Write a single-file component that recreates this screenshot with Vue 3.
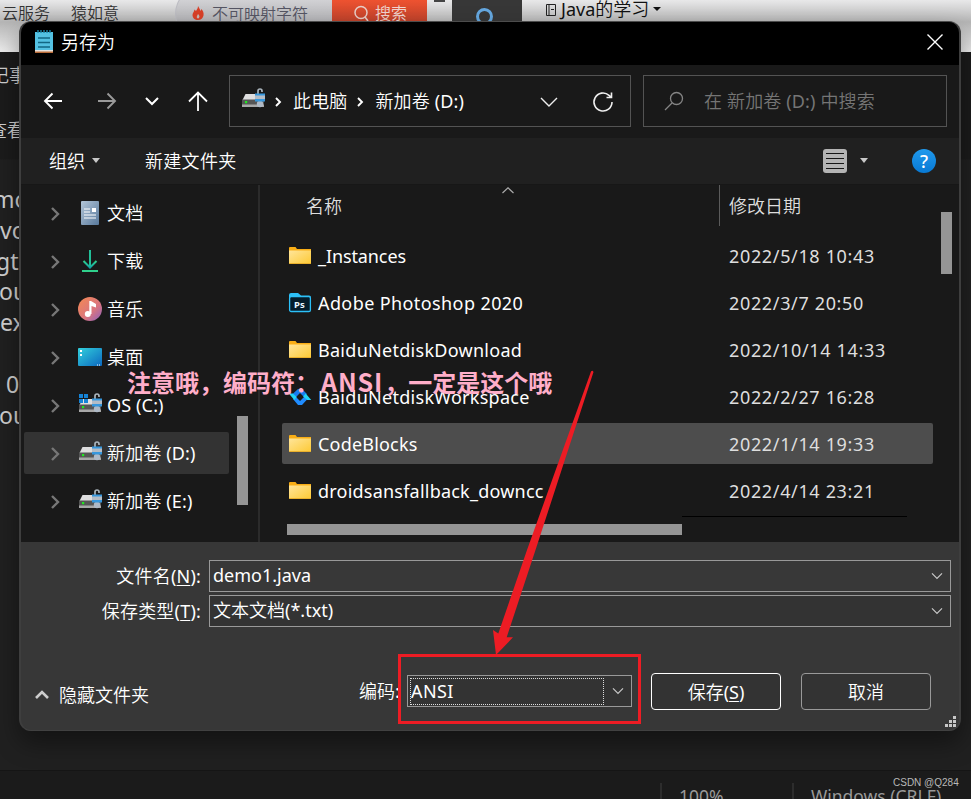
<template>
  <div class="desktop">
    <div class="browser">
      <span class="link">云服务</span>
      <span class="link second">猿如意</span>
      <div class="search-field">
        <svg class="flame" width="12" height="14" viewBox="0 0 12 14"><path d="M6 0c1 2 2 3 2.500 5L9.500 3C11 5 12 7 11.500 9.500C11 12 9 14 6 14S.5 12 .5 9C.5 7 2 6 2.500 3.500L4 5C5 3.500 6 2 6 0z" fill="#d94028" /><path d="M6 8c1 1 2 2 1 4-1 1-3 0-2-2z" fill="#c8b8b4" /></svg>
        <span>不可映射字符</span>
      </div>
      <div class="search-btn">
        <svg width="18" height="18" viewBox="0 0 18 18" fill="none" stroke="#e8cdc6" stroke-width="1.500"><circle cx="8" cy="7.500" r="6" /><path d="M12 12l3 4" /></svg>
        <span>搜索</span>
      </div>
      <i class="pointer"></i>
      <div class="avatar"><i></i></div>
      <div class="bookmark">
        <svg width="11" height="13" viewBox="0 0 11 13" fill="none" stroke="#222" stroke-width="1"><path d="M.5.5h9v11h-9zM3 .5v11M5 5.500h3" /></svg>
        <span>Java的学习</span>
        <i class="caret dark"></i>
      </div>
    </div>

    <div class="editor">
      <div class="editor-title">记事本</div>
      <div class="editor-menu">查看</div>
      <div class="code">
        <p v-for="(line, i) in codeLines" :key="i" :style="{ textIndent: line.indent + 'px' }">{{ line.text }}</p>
      </div>
    </div>
    <div class="status">
      <span class="zoom">100%</span>
      <span class="eol">Windows (CRLF)</span>
    </div>

    <div class="dialog">
      <header class="title">
        <svg width="20" height="24" viewBox="0 0 20 24"><path d="M1 2h18v21H1z" fill="#53c1e2" /><path d="M1 21h18v2H1z" fill="#b96a37" /><path d="M1 20h18v1.500H1z" fill="#e8e4df" /><path d="M4 8h12M4 12.500h12M4 17h12" stroke="#126784" stroke-width="1.600" /><path d="M4 0v3M7 0v3M10 0v3M13 0v3M16 0v3" stroke="#1d83a4" stroke-width="1.400" /></svg>
        <span>另存为</span>
        <svg class="close" width="16" height="16" viewBox="0 0 16 16" stroke="#fff" stroke-width="1.400"><path d="M.5.5l15 15M15.500.5l-15 15" /></svg>
      </header>

      <nav class="nav">
        <svg class="back" width="20" height="18" viewBox="0 0 20 18" fill="none" stroke="#fff" stroke-width="1.900"><path d="M19 9H2M9.500 1.500L2 9l7.500 7.500" /></svg>
        <svg class="forward" width="20" height="18" viewBox="0 0 20 18" fill="none" stroke="#9a9a9a" stroke-width="1.900"><path d="M1 9h17M10.500 1.500L18 9l-7.500 7.500" /></svg>
        <svg class="recent" width="14" height="9" viewBox="0 0 14 9" fill="none" stroke="#fff" stroke-width="2"><path d="M1 1l6 6 6-6" /></svg>
        <svg class="up" width="20" height="20" viewBox="0 0 20 20" fill="none" stroke="#fff" stroke-width="1.800"><path d="M10 20V2M1 10.500L10 1.500l9 9" /></svg>
        <div class="address">
          <svg class="drive" width="24" height="20" viewBox="0 0 24 20"><use href="#drive" /></svg>
          <svg class="crumb" width="7" height="10" viewBox="0 0 7 10" fill="none" stroke="#fff" stroke-width="1.900"><path d="M1 1l4 4-4 4" /></svg>
          <span>此电脑</span>
          <svg class="crumb" width="7" height="10" viewBox="0 0 7 10" fill="none" stroke="#fff" stroke-width="1.900"><path d="M1 1l4 4-4 4" /></svg>
          <span>新加卷 (D:)</span>
          <svg class="drop" width="18" height="10" viewBox="0 0 18 10" fill="none" stroke="#eee" stroke-width="1.400"><path d="M1 1l8 8 8-8" /></svg>
          <svg class="refresh" width="22" height="22" viewBox="0 0 22 22" fill="none" stroke="#eee" stroke-width="1.600"><path d="M20 11a9 9 0 1 1-3-6.700L19.500 6.500M19.500 1.500v5h-5" /></svg>
        </div>
        <div class="search">
          <svg width="20" height="20" viewBox="0 0 20 20" fill="none" stroke="#858585" stroke-width="1.300"><circle cx="12.500" cy="7.500" r="6" /><path d="M8 12l-7 7" /></svg>
          <span>在 新加卷 (D:) 中搜索</span>
        </div>
      </nav>

      <div class="toolbar">
        <span>组织</span><i class="caret"></i>
        <span class="new">新建文件夹</span>
        <svg class="view" width="24" height="24" viewBox="0 0 24 24"><rect width="24" height="24" rx="3" fill="#b4b4b4" /><path d="M3 4.500h18M3 9.500h18M3 14.500h18M3 19.500h18" stroke="#161616" stroke-width="1.200" /></svg>
        <i class="caret"></i>
        <span class="help">?</span>
      </div>

      <div class="body">
        <aside class="tree">
          <div v-for="node in nodes" :key="node.label" class="node" :class="{ active: node.active }">
            <svg class="expand" width="9" height="14" viewBox="0 0 9 14" fill="none" stroke="#777" stroke-width="2.400"><path d="M1 1l6 6-6 6" /></svg>
            <svg class="node-icon" width="24" height="24" viewBox="0 0 24 24"><use :href="'#' + node.icon" /></svg>
            <span>{{ node.label }}</span>
          </div>
          <i class="tree-thumb"></i>
        </aside>

        <section class="files">
          <div class="columns">
            <svg class="sort" width="12" height="7" viewBox="0 0 12 7" fill="none" stroke="#aaa" stroke-width="1.200"><path d="M.5 6L6 .8 11.500 6" /></svg>
            <span class="col-name">名称</span>
            <span class="col-date">修改日期</span>
          </div>
          <div v-for="file in files" :key="file.name" class="file" :class="{ hover: file.hover }">
            <svg class="file-icon" width="24" height="24" viewBox="0 0 24 24">
              <use :href="'#' + file.icon" />
              <text v-if="file.icon === 'ps'" x="6" y="17" class="ps-text">Ps</text>
            </svg>
            <span class="file-name" :style="{ letterSpacing: file.spacing + 'px' }">{{ file.name }}</span>
            <span class="file-date">{{ file.date }}</span>
          </div>
          <div class="h-scroll"><i></i></div>
          <i class="v-thumb"></i>
        </section>
      </div>

      <footer class="footer">
        <div class="field">
          <label>文件名(<u>N</u>):</label>
          <div class="combo editable"><span>demo1.java</span><svg width="12" height="8" viewBox="0 0 12 8"><use href="#chevron" /></svg></div>
        </div>
        <div class="field">
          <label>保存类型(<u>T</u>):</label>
          <div class="combo"><span>文本文档(*.txt)</span><svg width="12" height="8" viewBox="0 0 12 8"><use href="#chevron" /></svg></div>
        </div>
        <div class="actions">
          <svg width="14" height="10" viewBox="0 0 14 10" fill="none" stroke="#ccc" stroke-width="2.600"><path d="M1 8l6-6 6 6" /></svg>
          <span class="hide">隐藏文件夹</span>
          <span class="encoding">编码:</span>
          <div class="combo ansi"><span>ANSI</span><svg width="12" height="8" viewBox="0 0 12 8"><use href="#chevron" /></svg></div>
          <button class="save">保存(<u>S</u>)</button>
          <button>取消</button>
        </div>
        <svg class="grip" width="11" height="11" viewBox="0 0 11 11" fill="#c8c8c8"><path d="M8 0h3v3H8zM4 4h3v3H4zM8 4h3v3H8zM0 8h3v3H0zM4 8h3v3H4zM8 8h3v3H8z" /></svg>
      </footer>
    </div>

    <div class="note">注意哦，编码符：<span>ANSI</span>，一定是这个哦</div>
    <svg class="arrow" width="971" height="799" viewBox="0 0 971 799"><path d="M591 371.500Q592.500 370 593.500 372L535.500 550 506.700 637.300 513 637.300 496 655 493 630 498.300 633.500 527 550z" fill="#ed1c24" /></svg>
    <div class="mark"></div>
    <div class="watermark">CSDN @Q284</div>

    <svg class="defs" width="0" height="0">
      <defs>
        <linearGradient id="gFolder" x1="0" y1="0" x2="1" y2="1"><stop offset="0" stop-color="#ffe59a" /><stop offset="1" stop-color="#fdc934" /></linearGradient>
        <linearGradient id="gDoc" x1="0" y1="0" x2="1" y2="1"><stop offset="0" stop-color="#b4c6d8" /><stop offset="1" stop-color="#58799c" /></linearGradient>
        <linearGradient id="gMusic" x1="0" y1="0" x2="1" y2="1"><stop offset="0" stop-color="#f58a50" /><stop offset=".6" stop-color="#d97580" /><stop offset="1" stop-color="#8a5fc0" /></linearGradient>
        <linearGradient id="gDesk" x1="0" y1="0" x2="1" y2="1"><stop offset="0" stop-color="#32d0dc" /><stop offset="1" stop-color="#0c68c0" /></linearGradient>
        <linearGradient id="gDown" x1="0" y1="0" x2="0" y2="1"><stop offset="0" stop-color="#2fd08c" /><stop offset="1" stop-color="#12a5a6" /></linearGradient>
        <g id="drive">
          <path d="M4.500 6h15l3 6h-21z" fill="#dededf" />
          <path d="M1 11.500h22V18H1z" fill="#565656" /><path d="M1 16.500h22V19H1z" fill="#a8a8a8" />
          <path d="M4 13h2.200v2.200H4z" fill="#20e820" />
          <path d="M17 6V3q0-2 2-2t2 2v1" fill="none" stroke="#aab5bd" stroke-width="1.700" />
          <circle cx="19" cy="16" r="3.200" fill="#aeb9c6" />
          <path d="M14 5.500h10v8H14z" fill="#3697dd" /><path d="M14 7.500h10v3.500H14z" fill="#b3bcc6" />
        </g>
        <g id="disk"><use href="#drive" /></g>
        <g id="system"><use href="#drive" /><path d="M1 1h4v4H1zM6 1h4v4H6zM1 6h4v4H1zM6 6h4v4H6z" fill="#1583d6" /></g>
        <g id="doc"><rect x="3" width="18" height="24" rx="1" fill="url(#gDoc)" /><path d="M6 8h6M6 11h6M6 14h12M6 17h12" stroke="#fff" stroke-width="1.200" /><path d="M14 7h4v4h-4z" fill="#fff" /></g>
        <g id="download"><path d="M11 1h2v16h-2z" fill="#22bf98" /><path d="M5.500 12l6.500 6.500 6.500-6.500" fill="none" stroke="url(#gDown)" stroke-width="2" /><path d="M4 21h16v2H4z" fill="#2fd08c" /></g>
        <g id="music"><circle cx="12" cy="12" r="12" fill="url(#gMusic)" /><circle cx="9.800" cy="17" r="3" fill="#fff" /><path d="M11.300 4l1.700 0 5 3v3.500l-4.500-1.500v8h-2.200z" fill="#fff" /></g>
        <g id="desk"><rect y="3" width="24" height="18" rx="1" fill="url(#gDesk)" /><path d="M2 5h2v2H2zM2 9h2v2H2z" fill="#fff" /><path d="M19 20h1M21 20h1" stroke="#fff" /></g>
        <g id="folder"><path d="M1 4q0-1 1-1h5.500l1.500 2H23v5H1z" fill="#f9ae16" /><path d="M1 6.500h22V19q0 1-1 1H2q-1 0-1-1z" fill="url(#gFolder)" /><path d="M1 19h22q0 1-1 1H2q-1 0-1-1z" fill="#eab02c" /></g>
        <g id="ps"><path d="M1 4q0-2 2-2h7l3 2.500h8q2 0 2 2V12H1z" fill="#2cc0f8" /><rect x="1.600" y="5.700" width="20.800" height="14.800" rx="1.600" fill="#041c2b" stroke="#2cc0f8" stroke-width="1.300" /></g>
        <g id="baidu"><path d="M4 9.500L10 4h4l5 5-3 3-4-4-3.500 3.500L6 13.500z" fill="#187df0" /><path d="M20 13.500L14 20h-4l-5-6 3-2 4 4 3.500-3.500L18 10.500z" fill="#1f8cff" /><path d="M.8 8.500h4l4 3.500-2.500 3z" fill="#22d3f5" /><path d="M23.200 15h-4l-4-3.500 2.500-3z" fill="#22d3f5" /></g>
        <path id="chevron" d="M1 1.300l5 5 5-5" fill="none" stroke="#c8c8c8" stroke-width="1.200" />
      </defs>
    </svg>
  </div>
</template>

<script setup>
const codeLines = [
  { text: 'mo', indent: -7 },
  { text: 'vo', indent: 0 },
  { text: 'gth', indent: -4 },
  { text: 'ou', indent: -1 },
  { text: 'ex', indent: 0 },
  { text: '', indent: 0 },
  { text: '0', indent: 6 },
  { text: 'ou', indent: -1 }
];

const nodes = [
  { label: '文档', icon: 'doc' },
  { label: '下载', icon: 'download' },
  { label: '音乐', icon: 'music' },
  { label: '桌面', icon: 'desk' },
  { label: 'OS (C:)', icon: 'system' },
  { label: '新加卷 (D:)', icon: 'disk', active: true },
  { label: '新加卷 (E:)', icon: 'disk' }
];

const files = [
  { name: '_Instances', date: '2022/5/18 10:43', icon: 'folder', spacing: -0.1 },
  { name: 'Adobe Photoshop 2020', date: '2022/3/7 20:50', icon: 'ps', spacing: 0.4 },
  { name: 'BaiduNetdiskDownload', date: '2022/10/14 14:33', icon: 'folder', spacing: 0.28 },
  { name: 'BaiduNetdiskWorkspace', date: '2022/2/27 16:28', icon: 'baidu', spacing: 0.28 },
  { name: 'CodeBlocks', date: '2022/1/14 19:33', icon: 'folder', spacing: 0.2, hover: true },
  { name: 'droidsansfallback_downcc', date: '2022/4/14 23:21', icon: 'folder', spacing: 0.22 }
];
</script>

<style>
body {
  margin: 0;
  overflow: hidden;
}
</style>

<style scoped>
.desktop {
  position: relative;
  width: 971px;
  height: 799px;
  overflow: hidden;
  background: #1e1e1e;
  color: #fff;
  font-family: "Noto Sans", "Noto Sans CJK SC DemiLight", "Noto Sans CJK SC Light", "Noto Sans CJK SC", sans-serif;
  font-size: 18px;
  font-weight: 400;
  white-space: nowrap;
  display: flex;
  flex-direction: column;
}

.desktop * {
  box-sizing: border-box;
}

svg {
  flex: none;
  display: block;
}

.browser {
  flex: none;
  height: 52px;
  display: flex;
  align-items: flex-start;
  color: #333;
  font-size: 16px;
  line-height: 27px;
  background: linear-gradient(#e8e8e9, #b5b5b5 22px, #eee 52px);
}

.link {
  margin-left: 2px;
  width: 48px;
}

.link.second {
  margin-left: 21px;
}

.search-field {
  margin: -14px 0 0 56px;
  padding: 14px 0 0 16px;
  width: 157px;
  height: 56px;
  border: 1px solid #bcbcc2;
  border-right: none;
  border-radius: 28px 0 0 28px;
  background: linear-gradient(#e4e4e7, #b0b0b3 36px);
  display: flex;
  gap: 8px;
  color: #555563;
}

.flame {
  margin-top: 5px;
}

.search-btn {
  width: 95px;
  height: 40px;
  padding-left: 21px;
  background: linear-gradient(#ee5230, #b9402a 24px);
  color: #f0d5cf;
  display: flex;
  gap: 4px;
}

.search-btn svg {
  margin-top: 5px;
}

.pointer {
  width: 11px;
  height: 2px;
  margin-left: 7px;
  background: #444;
}

.avatar {
  margin-left: 7px;
  width: 70px;
  height: 40px;
  background: #373737;
  padding: 8px 0 0 24px;
}

.avatar i {
  display: block;
  width: 17px;
  height: 17px;
  border: 3px solid #65a8e0;
  border-radius: 50%;
}

.bookmark {
  margin-left: 24px;
  color: #111;
  font-size: 18px;
  line-height: 19px;
  display: flex;
  align-items: flex-start;
  gap: 4px;
}

.bookmark svg {
  margin-top: 4px;
}

.caret {
  width: 0;
  height: 0;
  border: 4.5px solid transparent;
  border-top: 5px solid #c8c8c8;
  border-bottom: none;
}

.caret.dark {
  margin-top: 7px;
  border-width: 4px 4px 0;
  border-top-color: #111;
}

.editor {
  flex: 1;
  width: 971px;
  background: linear-gradient(#1b1b1b 107px, #202020 108px);
  color: #d0d0d0;
}

.editor-title {
  height: 50px;
  line-height: 47px;
  text-indent: -9px;
}

.editor-menu {
  height: 60px;
  line-height: 56px;
  text-indent: -11px;
}

.code {
  padding-top: 22px;
  font-size: 23px;
  line-height: 30.8px;
}

.code p {
  margin: 0;
  height: 30.8px;
}

.status {
  flex: none;
  height: 29px;
  background: #1b1b1b;
  border-top: 1px solid #151515;
  color: #999;
  font-size: 17.5px;
  display: flex;
  align-items: flex-start;
  padding: 12px 0 0 660px;
  line-height: 26px;
}

.status span {
  border-left: 2px solid #2d2d2d;
  padding-left: 17px;
  width: 132px;
}

.dialog {
  position: absolute;
  left: 19px;
  top: 21px;
  width: 942px;
  height: 710px;
  border: 2px solid #3e3e3e;
  border-top: 1px solid #4c4c4c;
  border-bottom: 1px solid #414141;
  border-radius: 12px;
  overflow: hidden;
  background: #373737;
  display: flex;
  flex-direction: column;
}

.desktop::before {
  content: "";
  position: absolute;
  left: 19px;
  top: 21px;
  width: 942px;
  height: 710px;
  border-radius: 12px;
  box-shadow: 0 12px 24px rgba(0, 0, 0, 0.4);
}

.title {
  flex: none;
  height: 43px;
  background: #000;
  display: flex;
  align-items: center;
  padding: 0 16px 3px 13px;
  gap: 7px;
  line-height: 40px;
}

.close {
  margin-left: auto;
}

.nav {
  flex: none;
  height: 73px;
  background: #191919;
  display: flex;
  align-items: center;
  padding: 0 12px 1px 22px;
}

.forward {
  margin-left: 34px;
}

.recent {
  margin-left: 28px;
}

.up {
  margin-left: 29px;
}

.address {
  flex: none;
  margin-left: 21px;
  width: 402px;
  height: 52px;
  border: 1px solid #535353;
  display: flex;
  align-items: center;
  padding-left: 11px;
}

.address span,
.search span {
  margin-top: -3px;
  letter-spacing: 0.15px;
}

.address .drive {
  margin-top: -7px;
}

.crumb {
  margin: 2px 11px 0 10px;
}

.drop {
  margin: 2px 0 0 auto;
}

.refresh {
  margin: 2px 16px 0 34px;
}

.search {
  margin-left: 12px;
  width: 304px;
  height: 52px;
  border: 1px solid #535353;
  display: flex;
  align-items: center;
  gap: 20px;
  padding-left: 20px;
  color: #757575;
}

.toolbar {
  flex: none;
  height: 47px;
  background: #202020;
  border-bottom: 1px solid #171717;
  display: flex;
  align-items: center;
  padding: 0 23px 1px 28px;
}

.toolbar > span:not(.help) {
  margin-top: -2px;
}

.toolbar .caret {
  margin-left: 7px;
}

.toolbar .new {
  margin-left: 45px;
  letter-spacing: 0.3px;
}

.view {
  margin-left: auto;
}

.toolbar .view + .caret {
  margin-left: 13px;
}

.toolbar .help {
  margin-left: 44px;
  width: 24px;
  height: 24px;
  border-radius: 50%;
  background: linear-gradient(#2099ec, #0879d4);
  text-align: center;
  line-height: 24px;
  font-weight: 500;
}

.body {
  flex: none;
  height: 357px;
  background: #191919;
  display: flex;
}

.tree {
  position: relative;
  width: 239px;
  padding: 4px 0 0 3px;
  border-right: 2px solid #2b2b2b;
}

.node {
  width: 205px;
  height: 42px;
  margin: 0 0 6px;
  display: flex;
  align-items: center;
  padding-left: 27px;
  border-radius: 2px;
}

.node:first-child {
  margin-top: 3px;
}

.node.active {
  background: #333;
}

.node span {
  margin-left: 5px;
  line-height: 40px;
  letter-spacing: 0.15px;
}

.node-icon {
  margin-left: 18px;
}

.expand {
  margin-top: 2px;
}

.tree-thumb {
  position: absolute;
  left: 216px;
  top: 231px;
  width: 11px;
  height: 89px;
  background: #959595;
}

.files {
  position: relative;
  flex: 1;
  padding-left: 22px;
}

.columns {
  height: 47px;
  display: flex;
  align-items: flex-start;
  padding-left: 24px;
  line-height: 42px;
  color: #dedede;
}

.sort {
  position: absolute;
  left: 242px;
  top: 2px;
}

.col-name {
  width: 413px;
}

.col-date {
  height: 41px;
  border-left: 1px solid #5b5b5b;
  padding-left: 9px;
}

.file {
  width: 651px;
  height: 41px;
  margin: 0 0 6px;
  display: flex;
  align-items: center;
  padding-left: 6px;
  border-radius: 2px;
}

.columns + .file {
  margin-top: 3px;
}

.file.hover {
  background: #4d4d4d;
}

.file-name {
  margin-left: 6px;
  width: 411px;
}

.file-date {
  color: #dedede;
  letter-spacing: 0.65px;
}

.ps-text {
  font: bold 9.5px "Noto Sans", sans-serif;
  fill: #e8f6ff;
}

.h-scroll {
  position: absolute;
  left: 27px;
  bottom: 0;
  width: 620px;
  height: 26px;
  padding-top: 8px;
}

.h-scroll::before {
  content: "";
  position: absolute;
  top: 0;
  left: 395px;
  width: 225px;
  height: 1px;
  background: #000;
}

.h-scroll i {
  display: block;
  width: 395px;
  height: 11px;
  background: #959595;
}

.v-thumb {
  position: absolute;
  left: 681px;
  top: 27px;
  width: 11px;
  height: 62px;
  background: #959595;
}

.footer {
  position: relative;
  flex: 1;
  padding: 18px 8px 0 0;
}

.field {
  height: 32px;
  margin-bottom: 3px;
  display: flex;
  align-items: center;
}

.field label {
  width: 180px;
  text-align: right;
  margin: -2px 8px 0 0;
  letter-spacing: 0.2px;
}

u {
  text-underline-offset: 2px;
  text-decoration-thickness: 1px;
}

.combo {
  flex: 1;
  height: 32px;
  border: 1px solid #999;
  background: #333;
  display: flex;
  align-items: center;
  justify-content: space-between;
  padding: 0 7px 0 3px;
}

.combo.editable {
  background: #383838;
}

.combo span {
  line-height: 28px;
  padding-bottom: 2px;
}

.actions {
  display: flex;
  align-items: center;
  margin-top: 46px;
  padding-left: 14px;
}

.actions > svg {
  margin-top: 6px;
}

.hide {
  margin: 5px 0 0 10px;
  width: 300px;
}

.encoding {
  width: 48px;
  margin-top: -4px;
}

.combo.ansi {
  flex: none;
  width: 225px;
  height: 32px;
  margin-top: -1px;
  padding-left: 2px;
}

.combo.ansi span {
  width: 194px;
  height: 27px;
  border: 1px dotted #ddd;
  line-height: 25px;
  padding: 0;
  letter-spacing: 0.4px;
}

button {
  width: 130px;
  height: 37px;
  margin-left: 20px;
  border: 1px solid #999;
  border-radius: 4px;
  background: #333;
  color: #fff;
  font: inherit;
  padding: 0 0 2px;
}

button.save {
  margin-left: 19px;
  border-color: #fff;
}

.grip {
  position: absolute;
  right: 3px;
  bottom: 3px;
}

.note {
  position: absolute;
  left: 127px;
  top: 364px;
  font: bold 24px/36px "Noto Sans CJK SC", sans-serif;
  color: #ffaec9;
}

.note span {
  margin: 0 1px 0 2px;
  font-size: 25px;
  letter-spacing: 0.9px;
  line-height: 1;
}

.arrow {
  position: absolute;
  left: 0;
  top: 0;
}

.mark {
  position: absolute;
  left: 398px;
  top: 654px;
  width: 243px;
  height: 70px;
  border: 3px solid #ed1c24;
}

.watermark {
  position: absolute;
  left: 893px;
  top: 776px;
  font: 10px/14px "Liberation Sans", Arial, sans-serif;
  color: #b8b8b8;
}

.defs {
  position: absolute;
}
</style>
